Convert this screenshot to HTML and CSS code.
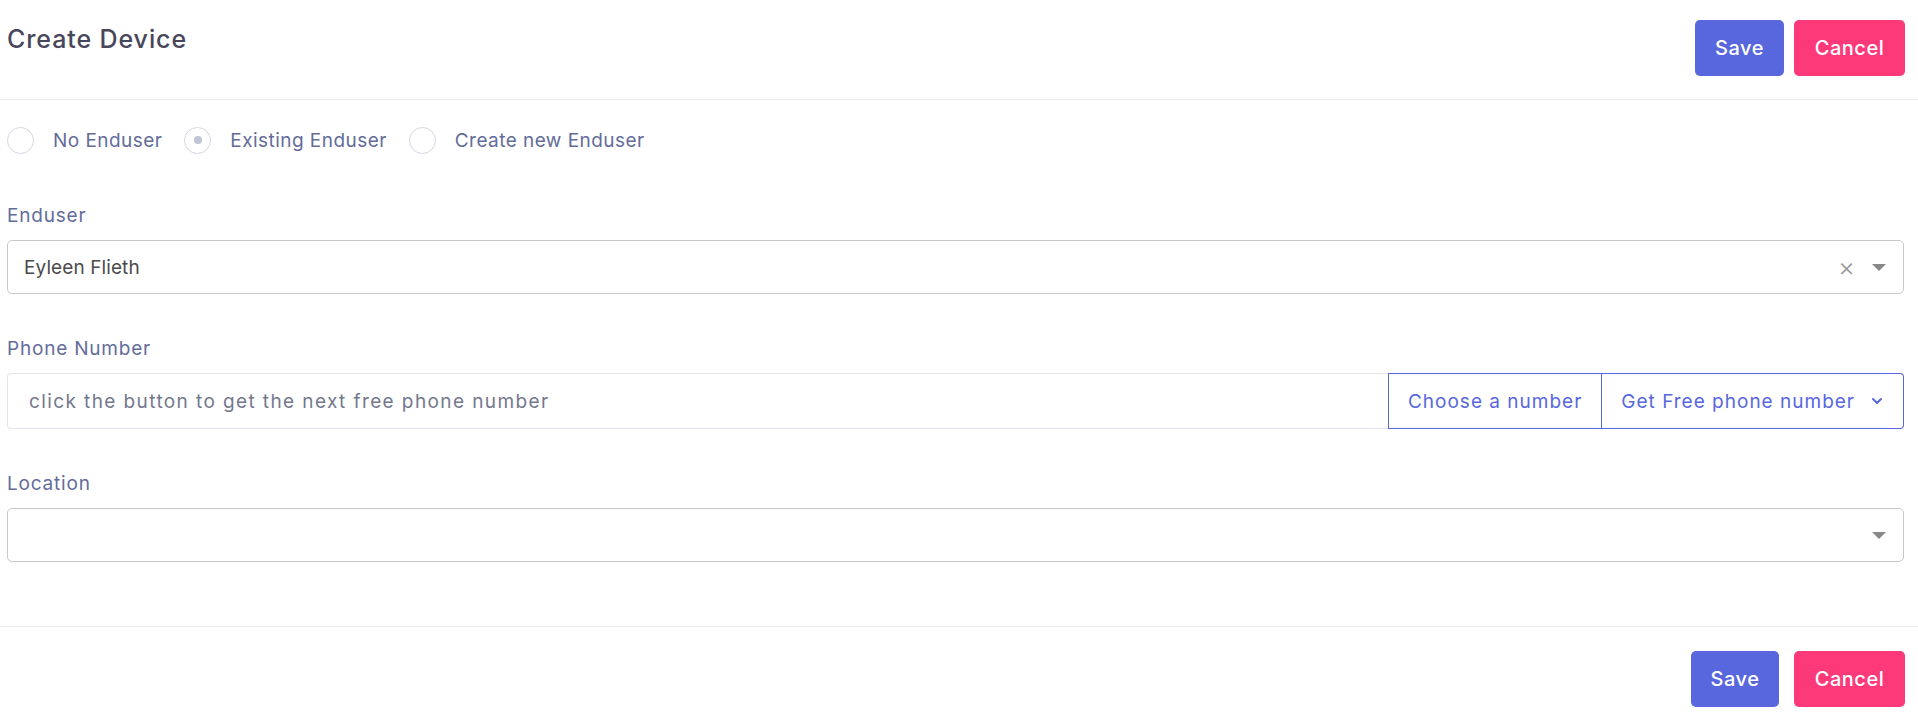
FILE: index.html
```html
<!DOCTYPE html>
<html lang="en">
<head>
    <meta charset="UTF-8">
    <meta name="viewport" content="width=device-width, initial-scale=1.0">
    <title>Create Device</title>
    <link rel="stylesheet" href="styles.css">
</head>
<body>
    <div class="portlet">
        <div class="portlet-head">
            <div class="portlet-title">Create Device</div>
            <div class="head-btns">
                <button class="btn btn-brand">Save</button>
                <button class="btn btn-danger">Cancel</button>
            </div>
        </div>

        <div class="portlet-body">
            <!-- Enduser mode -->
            <div class="radio-list">
                <label class="radio"><span class="radio-mark"></span>No Enduser</label>
                <label class="radio checked"><span class="radio-mark"></span>Existing Enduser</label>
                <label class="radio"><span class="radio-mark"></span>Create new Enduser</label>
            </div>

            <div class="form-group">
                <div class="form-label">Enduser</div>
                <div class="select-box">
                    <span class="select-value">Eyleen Flieth</span>
                    <span class="select-clear">&times;</span>
                    <span class="select-caret"></span>
                </div>
            </div>

            <div class="form-group">
                <div class="form-label">Phone Number</div>
                <div class="input-group">
                    <div class="form-input placeholder">click the button to get the next free phone number</div>
                    <button class="btn-outline">Choose a number</button>
                    <button class="btn-outline last">Get Free phone number
                        <svg class="chev" width="12" height="8" viewBox="0 0 12 8"><path d="M2 2 L6 6 L10 2" fill="none" stroke="#5867dd" stroke-width="2" stroke-linecap="round" stroke-linejoin="round"/></svg>
                    </button>
                </div>
            </div>

            <div class="form-group">
                <div class="form-label">Location</div>
                <div class="select-box">
                    <span class="select-value"></span>
                    <span class="select-caret"></span>
                </div>
            </div>
        </div>

        <div class="portlet-foot">
            <button class="btn btn-brand">Save</button>
            <button class="btn btn-danger">Cancel</button>
        </div>
    </div>
</body>
</html>
```

FILE: styles.css
```css
body {
    margin: 0;
    background: #ffffff;
    font-family: 'Inter', 'Noto Sans', sans-serif;
    color: #595d6e;
}
.portlet {
    background: white;
}
.portlet-head {
    display: flex;
    justify-content: space-between;
    align-items: flex-start;
    padding: 20px 13px 23px 7px;
    border-bottom: 1px solid #ebedf2;
}
.portlet-title {
    font-size: 25px;
    font-weight: 500;
    letter-spacing: 0.9px;
    color: #48465b;
    line-height: 38px;
}
.head-btns {
    display: flex;
    gap: 10px;
}
.btn {
    height: 56px;
    border: none;
    border-radius: 5px;
    color: white;
    font-family: inherit;
    font-size: 20px;
    letter-spacing: 0.5px;
    font-weight: 500;
    cursor: pointer;
}
.btn-brand {
    background: #5867dd;
    width: 89px;
}
.btn-danger {
    background: #fd397a;
    width: 111px;
}
.portlet-body {
    padding: 27px 14px 64px 7px;
}
.radio-list {
    display: flex;
    gap: 22px;
    height: 26px;
    align-items: center;
    margin-bottom: 48px;
}
.radio {
    display: flex;
    align-items: center;
    gap: 19px;
    font-size: 19px;
    letter-spacing: 0.45px;
    color: #646c9a;
    cursor: pointer;
}
.radio-mark {
    width: 25px;
    height: 25px;
    border: 1px solid #d1d7e2;
    border-radius: 50%;
    display: flex;
    justify-content: center;
    align-items: center;
}
.radio.checked .radio-mark::after {
    content: "";
    width: 8px;
    height: 8px;
    border-radius: 50%;
    background: #bfc5d6;
}
.form-group {
    margin-bottom: 40px;
}
.form-group:last-child {
    margin-bottom: 0;
}
.form-label {
    font-size: 19px;
    letter-spacing: 0.8px;
    line-height: 29px;
    color: #646c9a;
    margin-bottom: 10px;
}
.select-box {
    height: 52px;
    border: 1px solid #c8c8c8;
    border-radius: 5px;
    display: flex;
    align-items: center;
    padding: 0 17px 0 16px;
}
.select-value {
    flex: 1;
    font-size: 19px;
    letter-spacing: 0.1px;
    color: #4a4a4a;
}
.select-clear {
    font-size: 26px;
    font-weight: 300;
    color: #999;
    margin-right: 17px;
    line-height: 1;
}
.select-caret {
    width: 0;
    height: 0;
    border-left: 7px solid transparent;
    border-right: 7px solid transparent;
    border-top: 7px solid #888;
}
.input-group {
    display: flex;
    height: 56px;
}
.form-input {
    flex: 1;
    border: 1px solid #e2e5ec;
    border-right: none;
    border-radius: 4px 0 0 4px;
    display: flex;
    align-items: center;
    padding-left: 21px;
    font-size: 19px;
    letter-spacing: 1.4px;
}
.form-input.placeholder {
    color: #74788d;
}
.btn-outline {
    background: white;
    border: 1px solid #5867dd;
    color: #5867dd;
    font-family: inherit;
    font-size: 19px;
    letter-spacing: 1px;
    padding: 0 19px;
    display: flex;
    align-items: center;
    cursor: pointer;
}
.btn-outline.last {
    border-left: none;
    border-radius: 0 4px 4px 0;
    gap: 16px;
    padding-right: 20px;
}
.portlet-foot {
    display: flex;
    justify-content: flex-end;
    gap: 15px;
    padding: 24px 13px 0 7px;
    border-top: 1px solid #ebedf2;
}
.portlet-foot .btn-brand {
    width: 88px;
}
```
